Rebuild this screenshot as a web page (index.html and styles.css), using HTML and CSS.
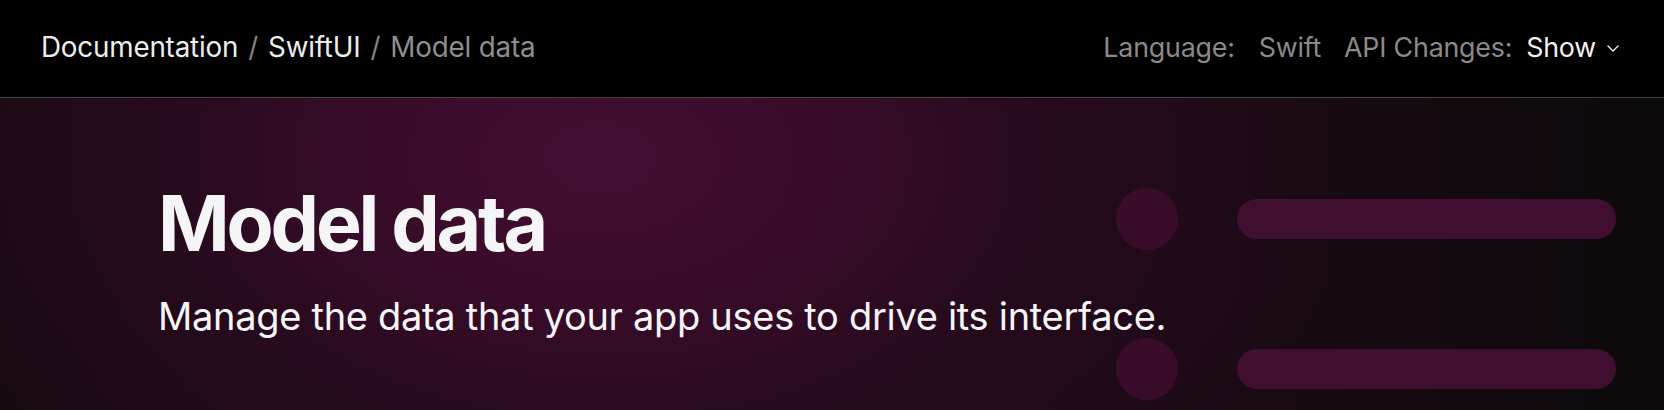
FILE: index.html
```html
<!DOCTYPE html>
<html lang="en">
<head>
<meta charset="utf-8">
<title>Model data | Apple Developer Documentation</title>
<link rel="stylesheet" href="styles.css">
</head>
<body>
<header class="nav">
  <nav class="crumbs">
    <a class="crumb" href="#">Documentation</a>
    <span class="sep">/</span>
    <a class="crumb" href="#">SwiftUI</a>
    <span class="sep">/</span>
    <span class="current">Model data</span>
  </nav>
  <div class="options">
    <span class="label">Language:</span>
    <span class="value">Swift</span>
    <span class="label api">API Changes:</span>
    <span class="show">Show
      <svg class="chev" viewBox="0 0 12 7" width="12" height="7" aria-hidden="true"><path d="M1 1l5 5 5-5" fill="none" stroke="currentColor" stroke-width="1.4" stroke-linecap="round" stroke-linejoin="round"/></svg>
    </span>
  </div>
</header>
<section class="hero">
  <div class="copy">
    <h1 class="title">Model data</h1>
    <p class="abstract">Manage the data that your app uses to drive its interface.</p>
  </div>
  <div class="deco" aria-hidden="true">
    <div class="dot"></div><div class="bar"></div>
    <div class="dot"></div><div class="bar"></div>
  </div>
</section>
</body>
</html>
```
FILE: styles.css
```css
* { box-sizing: border-box; }
html, body { margin: 0; padding: 0; }
body {
  background: #000;
  font-family: Inter, "Noto Sans", "Liberation Sans", sans-serif;
  width: 1664px;
  height: 410px;
  overflow: hidden;
}
.nav {
  height: 98px;
  background: #000;
  border-bottom: 1px solid #434343;
  display: flex;
  align-items: center;
  justify-content: space-between;
  padding: 0 45px 4px 41px;
  letter-spacing: -0.2px;
}
.crumbs { display: flex; align-items: baseline; font-size: 27.8px; }
.crumb { color: #ececec; text-decoration: none; }
.sep { color: #858585; margin: 0 10px; }
.current { color: #8e8e8e; }
.options { display: flex; align-items: baseline; color: #8a8a8a; font-size: 26.8px; }
.value { margin-left: 24px; }
.api { margin-left: 23px; }
.show { margin-left: 14px; color: #f2f2f2; display: inline-flex; align-items: center; }
.chev { margin-left: 11px; margin-top: 4px; }
.hero {
  height: 312px;
  display: flex;
  padding: 0 48px 0 158px;
  background:
    radial-gradient(ellipse 760px 480px at 600px 60px, rgba(68,14,50,1) 0%, rgba(58,12,42,0.95) 30%, rgba(40,10,30,0.8) 60%, rgba(20,10,16,0) 100%),
    linear-gradient(90deg, #150a11 0%, #1f0a18 40%, #1a0a14 75%, #0c0a0b 100%);
}
.copy {
  flex: 1 1 auto;
  min-width: 0;
  padding-top: 79px;
  color: #f5f5f7;
  white-space: nowrap;
}
.title {
  margin: 0;
  font-size: 77px;
  font-weight: 680;
  line-height: 92px;
  letter-spacing: -3.2px;
}
.abstract {
  margin: 23px 0 0;
  font-size: 38px;
  line-height: 48px;
  font-weight: 400;
  letter-spacing: -0.3px;
}
.deco {
  flex: 0 0 auto;
  display: grid;
  grid-template-columns: 62px 379px;
  column-gap: 59px;
  row-gap: 88px;
  align-items: center;
  align-content: start;
  padding-top: 90px;
}
.dot { width: 62px; height: 62px; border-radius: 50%; background: rgba(66,14,48,0.75); }
.bar { height: 40px; border-radius: 20px; background: #400e2f; }
```
